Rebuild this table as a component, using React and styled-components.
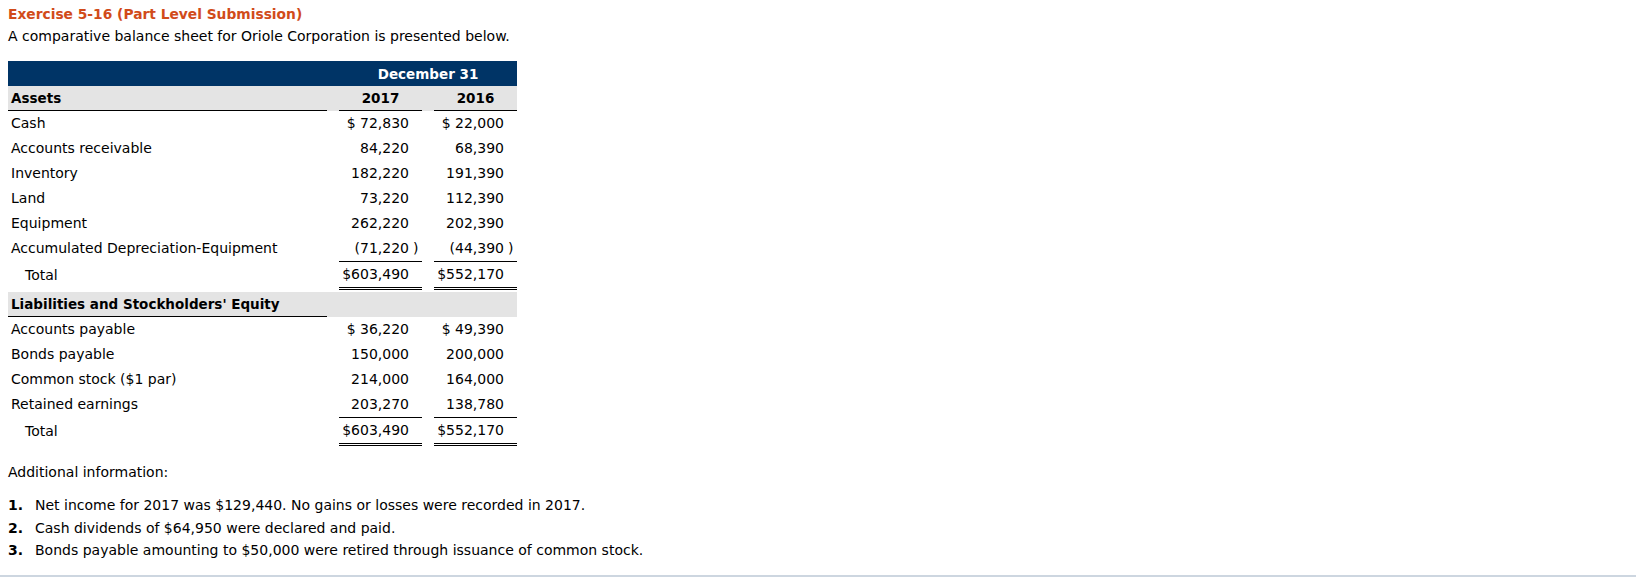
import React from "react"
import styled, { createGlobalStyle } from "styled-components"

const GlobalStyle = createGlobalStyle`
  html, body {
    margin: 0;
    padding: 0;
    background: #fff;
  }
  body {
    font-family: "DejaVu Sans", Verdana, sans-serif;
    font-size: 14px;
    color: #000;
  }
`

const Page = styled.div`
  height: 577px;
  display: flex;
  flex-direction: column;
`

const Content = styled.div`
  flex: 1;
  padding: 5px 8px 0;
`

const Footer = styled.div`
  height: 2px;
  background: #cdd6e0;
`

const Title = styled.h2`
  margin: 0;
  font-size: 13.8px;
  line-height: 18px;
  font-weight: bold;
  color: #d14b1a;
`

const Intro = styled.p`
  margin: 4px 0 0;
  line-height: 18px;
`

const Sheet = styled.div`
  width: 509px;
  margin-top: 16px;
`

const Row = styled.div`
  display: grid;
  grid-template-columns: 319px 83px 83px;
  column-gap: 12px;
  height: ${({ $total }) => ($total ? "29px" : "25px")};
  margin-bottom: ${({ $gap }) => ($gap ? "2px" : "0")};
  background: ${({ $tone }) =>
    $tone === "navy" ? "#003466" : $tone === "gray" ? "#e4e4e4" : "transparent"};
  color: ${({ $tone }) => ($tone === "navy" ? "#fff" : "#000")};
`

const Label = styled.div`
  box-sizing: border-box;
  display: flex;
  align-items: center;
  padding-left: ${({ $indent }) => ($indent ? "17px" : "3px")};
  padding-bottom: ${({ $bold }) => ($bold ? "0" : "2px")};
  font-weight: ${({ $bold }) => ($bold ? "bold" : "normal")};
  font-size: ${({ $bold }) => ($bold ? "13.5px" : "14px")};
  border-bottom: ${({ $rule }) => ($rule ? "1px solid #000" : "none")};
`

const Span = styled.div`
  grid-column: 2 / 4;
  display: flex;
  align-items: center;
  justify-content: center;
  font-weight: bold;
  font-size: 13.5px;
`

const Year = styled.div`
  box-sizing: border-box;
  display: flex;
  align-items: center;
  justify-content: center;
  font-weight: bold;
  font-size: 13.5px;
  border-bottom: 1px solid #000;
`

const Amount = styled.div`
  box-sizing: border-box;
  display: flex;
  align-items: center;
  justify-content: flex-end;
  padding-bottom: 2px;
  white-space: pre;
  border-top: ${({ $total }) => ($total ? "1px solid #000" : "none")};
  border-bottom: ${({ $total }) => ($total ? "3px double #000" : "none")};
`

const Paren = styled.span`
  box-sizing: border-box;
  width: 13px;
  padding-left: 4px;
  text-align: left;
`

const Note = styled.p`
  margin: 17px 0 0;
  line-height: 18px;
`

const Facts = styled.ol`
  margin: 13px 0 0;
  padding: 0;
  list-style: none;
`

const Fact = styled.li`
  display: flex;
  line-height: 22.5px;
`

const FactNum = styled.span`
  width: 27px;
  font-weight: bold;
`

const assets = [
  ["Cash", "$ 72,830", "$ 22,000"],
  ["Accounts receivable", "84,220", "68,390"],
  ["Inventory", "182,220", "191,390"],
  ["Land", "73,220", "112,390"],
  ["Equipment", "262,220", "202,390"],
  ["Accumulated Depreciation-Equipment", "(71,220", "(44,390", true],
]

const liabilities = [
  ["Accounts payable", "$ 36,220", "$ 49,390"],
  ["Bonds payable", "150,000", "200,000"],
  ["Common stock ($1 par)", "214,000", "164,000"],
  ["Retained earnings", "203,270", "138,780"],
]

const facts = [
  "Net income for 2017 was $129,440. No gains or losses were recorded in 2017.",
  "Cash dividends of $64,950 were declared and paid.",
  "Bonds payable amounting to $50,000 were retired through issuance of common stock.",
]

const Line = ({ label, a, b, neg }) => (
  <Row>
    <Label>{label}</Label>
    <Amount>
      {a}
      <Paren>{neg ? ")" : ""}</Paren>
    </Amount>
    <Amount>
      {b}
      <Paren>{neg ? ")" : ""}</Paren>
    </Amount>
  </Row>
)

const TotalLine = ({ gap }) => (
  <Row $total $gap={gap}>
    <Label $indent>Total</Label>
    <Amount $total>
      $603,490
      <Paren />
    </Amount>
    <Amount $total>
      $552,170
      <Paren />
    </Amount>
  </Row>
)

export default function App() {
  return (
    <Page>
      <GlobalStyle />
      <Content>
        <Title>Exercise 5-16 (Part Level Submission)</Title>
        <Intro>A comparative balance sheet for Oriole Corporation is presented below.</Intro>

        <Sheet>
          <Row $tone="navy">
            <div />
            <Span>December 31</Span>
          </Row>
          <Row $tone="gray">
            <Label $bold $rule>Assets</Label>
            <Year>2017</Year>
            <Year>2016</Year>
          </Row>
          {assets.map(([label, a, b, neg]) => (
            <Line key={label} label={label} a={a} b={b} neg={neg} />
          ))}
          <TotalLine gap />
          <Row $tone="gray">
            <Label $bold $rule>Liabilities and Stockholders' Equity</Label>
          </Row>
          {liabilities.map(([label, a, b]) => (
            <Line key={label} label={label} a={a} b={b} />
          ))}
          <TotalLine />
        </Sheet>

        <Note>Additional information:</Note>
        <Facts>
          {facts.map((text, i) => (
            <Fact key={i}>
              <FactNum>{i + 1}.</FactNum>
              <span>{text}</span>
            </Fact>
          ))}
        </Facts>
      </Content>
      <Footer />
    </Page>
  )
}
